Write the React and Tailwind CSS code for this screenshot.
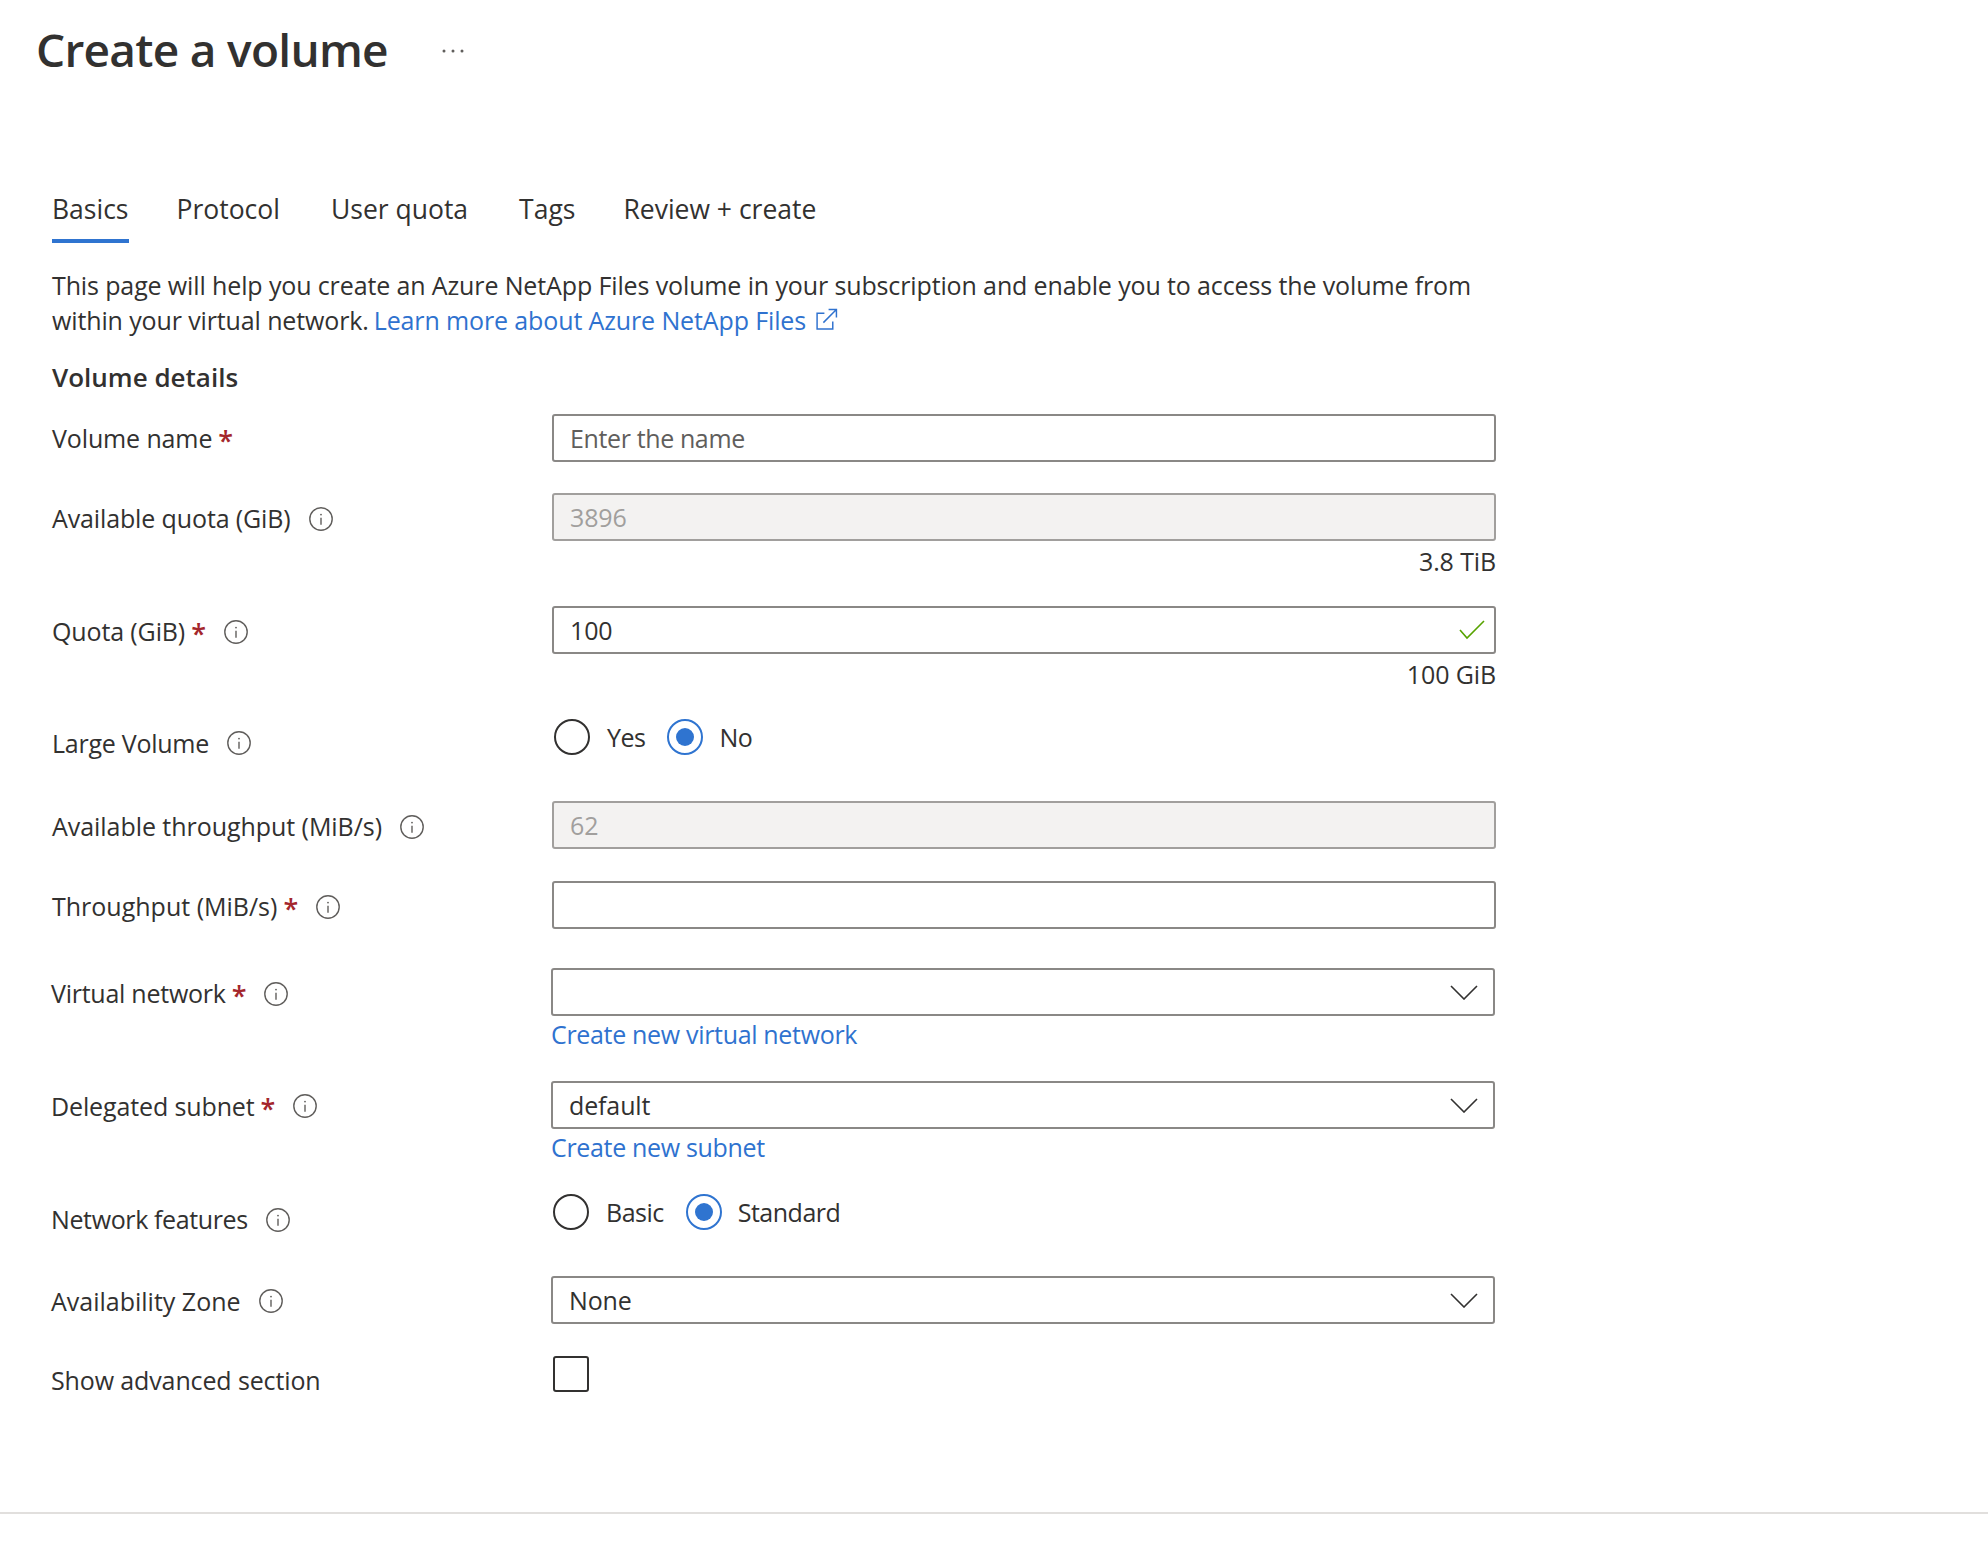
import React from 'react';

const Info = () => (
    <svg className='w-[24px] h-[24px] shrink-0' viewBox='0 0 24 24' fill='none'>
        <circle cx='12' cy='12' r='11.2' stroke='#605e5c' strokeWidth='1.4' />
        <circle cx='12' cy='7.6' r='0.9' fill='#605e5c' />
        <path d='M12 10.8v7' stroke='#605e5c' strokeWidth='1.4' />
    </svg>
);

const Star = () => <span className='ml-[6px] text-[#a4262c] text-[27px] font-semibold leading-[35px] translate-y-[2px]'>*</span>;

const Label = ({ text, required, info, pt, track = '' }) => (
    <div className={`w-[500px] shrink-0 flex items-center ${pt}`}>
        <span className={track}>{text}</span>
        {required && <Star />}
        {info && <span className='ml-[18px]'><Info /></span>}
    </div>
);

const Chevron = () => (
    <svg className='mr-[15px]' width='28' height='15' viewBox='0 0 28 15' fill='none' stroke='#323130' strokeWidth='1.6'>
        <path d='M1 1l13 13L27 1' />
    </svg>
);

const Input = ({ value, placeholder, disabled, check, select }) => (
    <div className={`h-[48px] w-full border-2 rounded-[3px] flex items-center justify-between pl-[16px] ${disabled ? 'bg-[#f3f2f1] border-[#a19f9d] text-[#a19f9d]' : 'bg-white border-[#8a8886]'} ${placeholder ? 'text-[#605e5c] tracking-[-0.015em]' : ''}`}>
        <span>{value || placeholder}</span>
        {check && (
            <svg className='w-[26px] h-[20px] mr-[9px]' viewBox='0 0 26 20' fill='none'>
                <path d='M1 10l7 8L25 1' stroke='#57a300' strokeWidth='1.6' />
            </svg>
        )}
        {select && <Chevron />}
    </div>
);

const Radio = ({ checked }) => (
    <span className={`w-[36px] h-[36px] rounded-full border-2 flex items-center justify-center shrink-0 ${checked ? 'border-[#2f74d0]' : 'border-[#323130]'}`}>
        {checked && <span className='w-[18px] h-[18px] rounded-full bg-[#2f74d0]' />}
    </span>
);

const RadioGroup = ({ first, second }) => (
    <div className='flex items-center h-[36px] pl-[2px] tracking-[-0.02em]'>
        <Radio />
        <span className='ml-[17px]'>{first}</span>
        <span className='ml-[22px]'><Radio checked /></span>
        <span className='ml-[16px]'>{second}</span>
    </div>
);

const Hint = ({ children }) => <div className='text-right mt-[3px] leading-[35px] h-[35px]'>{children}</div>;

const LinkText = ({ children }) => <div className='text-[#2f72cf] leading-[35px] h-[35px] -mb-[35px] mt-[1px] tracking-[-0.013em]'>{children}</div>;

export default function App() {
    return (
        <div className='w-[1988px] h-[1544px] bg-white overflow-hidden text-[#323130] text-[25px] leading-[35px] tracking-[-0.005em]' style={{ fontFamily: '"Open Sans", sans-serif' }}>
            <div className='pl-[36px] pt-[17px] flex items-center h-[80px]'>
                <h1 className='text-[46px] leading-[60px] font-semibold tracking-[-0.0155em]'>Create a volume</h1>
                <svg className='ml-[54px] mt-[4px]' width='22' height='4' viewBox='0 0 22 4' fill='#605e5c'>
                    <circle cx='2' cy='2' r='1.5' />
                    <circle cx='11' cy='2' r='1.5' />
                    <circle cx='20' cy='2' r='1.5' />
                </svg>
            </div>

            <div className='pl-[52px]'>
                <div className='flex gap-[51px] mt-[112px] h-[51px] text-[26.5px] tracking-normal'>
                    <div className='h-[51px] border-b-4 border-[#2f74d0] font-medium -mr-[3px]'>Basics</div>
                    <div>Protocol</div>
                    <div>User quota</div>
                    <div className='-mr-[3px]'>Tags</div>
                    <div>Review + create</div>
                </div>

                <div className='w-[1444px] mt-[25px]'>
                    <p>This page will help you create an Azure NetApp Files volume in your subscription and enable you to access the volume from</p>
                    <p className='flex items-center'>
                        <span>within your virtual network.</span>
                        <span className='ml-[5px] text-[#2f72cf]'>Learn more about Azure NetApp Files</span>
                        <svg className='ml-[9px] mb-[2px]' width='23' height='23' viewBox='0 0 22 22' fill='none' stroke='#2f72cf' strokeWidth='1.4'>
                            <path d='M9 5H2v15h15v-7' />
                            <path d='M8 14L20 2M13 1.5h7.5V9' />
                        </svg>
                    </p>
                    <h2 className='font-semibold text-[26px] tracking-normal mt-[22px]'>Volume details</h2>
                </div>

                <div className='flex mt-[19px]'>
                    <Label text='Volume name' required pt='pt-0 h-[48px]' />
                    <div className='w-[944px]'><Input placeholder='Enter the name' /></div>
                </div>

                <div className='flex mt-[31px]'>
                    <Label text='Available quota (GiB)' info pt='pt-[3px] h-[48px]' />
                    <div className='w-[944px]'>
                        <Input value='3896' disabled />
                        <Hint>3.8 TiB</Hint>
                    </div>
                </div>

                <div className='flex mt-[27px]'>
                    <Label text='Quota (GiB)' required info pt='pt-[3px] h-[48px]' />
                    <div className='w-[944px]'>
                        <Input value='100' check />
                        <Hint>100 GiB</Hint>
                    </div>
                </div>

                <div className='flex mt-[27px]'>
                    <Label text='Large Volume' info track='tracking-[-0.01em]' pt='pt-[12px] h-[36px]' />
                    <RadioGroup first='Yes' second='No' />
                </div>

                <div className='flex mt-[46px]'>
                    <Label text='Available throughput (MiB/s)' info track='tracking-[-0.002em]' pt='pt-[3px] h-[48px]' />
                    <div className='w-[944px]'><Input value='62' disabled /></div>
                </div>

                <div className='flex mt-[32px]'>
                    <Label text='Throughput (MiB/s)' required info track='tracking-normal' pt='pt-[3px] h-[48px]' />
                    <div className='w-[944px]'><Input /></div>
                </div>
            </div>

            <div className='pl-[51px]'>
                <div className='flex mt-[39px]'>
                    <Label text='Virtual network' required info track='tracking-[-0.01em]' pt='pt-[3px] h-[48px]' />
                    <div className='w-[944px]'>
                        <Input select />
                        <LinkText>Create new virtual network</LinkText>
                    </div>
                </div>

                <div className='flex mt-[64px]'>
                    <Label text='Delegated subnet' required info pt='pt-[2px] h-[48px]' />
                    <div className='w-[944px]'>
                        <Input value='default' select />
                        <LinkText>Create new subnet</LinkText>
                    </div>
                </div>

                <div className='flex mt-[64px]'>
                    <Label text='Network features' info track='tracking-[-0.015em]' pt='pt-[15px] h-[36px]' />
                    <RadioGroup first='Basic' second='Standard' />
                </div>

                <div className='flex mt-[46px]'>
                    <Label text='Availability Zone' info track='tracking-normal' pt='pt-[2px] h-[48px]' />
                    <div className='w-[944px]'><Input value='None' select /></div>
                </div>

                <div className='flex mt-[32px]'>
                    <Label text='Show advanced section' pt='pt-[12px] h-[36px]' />
                    <span className='ml-[2px] w-[36px] h-[36px] border-2 border-[#323130] rounded-[3px]' />
                </div>
            </div>

            <div className='mt-[120px] h-[2px] bg-[#e1dfdd]' />
        </div>
    );
}
